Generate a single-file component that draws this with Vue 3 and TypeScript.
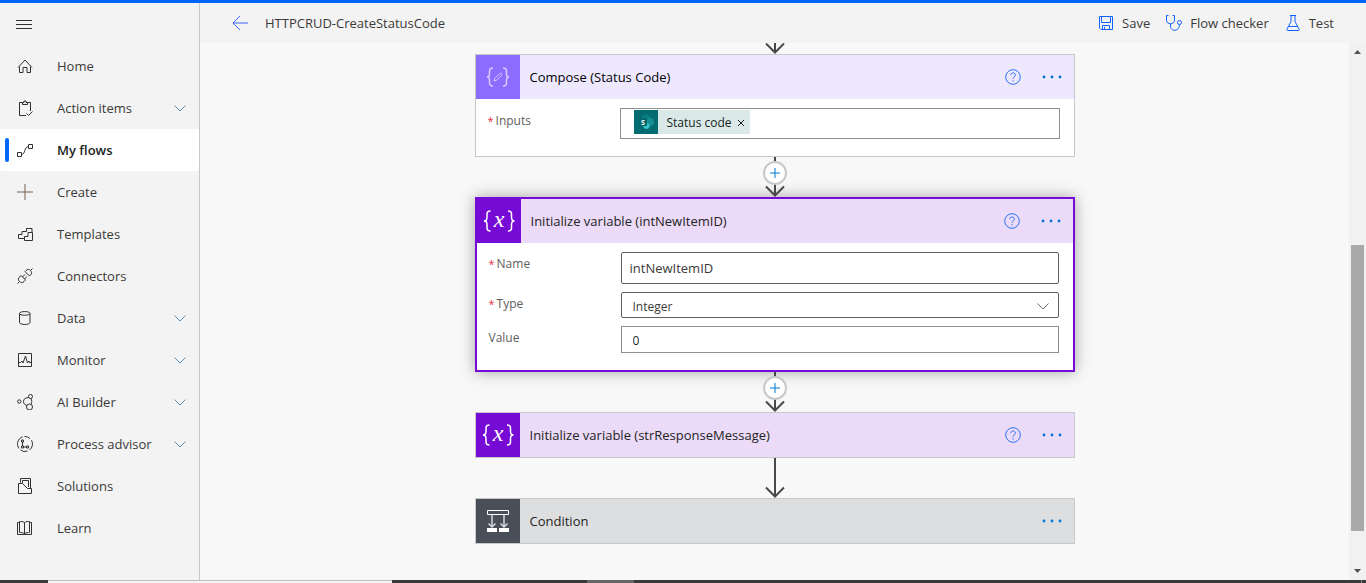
<script setup lang="ts">
import { ref } from 'vue'

interface NavItem {
  label: string
  icon: string
  expandable?: boolean
  active?: boolean
}

const navItems: NavItem[] = [
  { label: 'Home', icon: 'M1 9.5 8 2l7 7.5M2.5 8.5v6H6v-5h4v5h3.5v-6' },
  {
    label: 'Action items',
    icon: 'M9 15.5H2.5v-13h3M10.5 2.5h3V11M5.5 4.5v-2H7V1h2v1.5h1.5v2zM9.5 13.5l2 2 4-4',
    expandable: true,
  },
  {
    label: 'My flows',
    icon: 'M.5 10.5h4v4h-4zM11.5 2.5h4v4h-4zM4.5 12.5c4 0 2.5-8 7-8',
    active: true,
  },
  { label: 'Create', icon: 'M8 0v16M0 8h16' },
  {
    label: 'Templates',
    icon: 'M7 12.5H1.5v-4H5v-3h4.5v-3H15v4M7.5 14.5h8v-8H11v4H7.5z',
  },
  {
    label: 'Connectors',
    icon: 'M.5 15.5l2-2M13.5 2.5l2-2M2.5 13.5C1 12 1 10.5 2.5 9L4 7.5 8.5 12 7 13.5c-1.5 1.5-3 1.5-4.5 0zM13.5 2.5c1.5 1.5 1.5 3 0 4.5l-1 1L8 3.5l1-1c1.5-1.5 3-1.5 4.5 0zM5.5 9 8 6.5M7.5 11 10 8.5',
  },
  {
    label: 'Data',
    icon: 'M2.5 3.5c0-2.600 10.5-2.600 10.5 0v9c0 2.600-10.5 2.600-10.5 0zM2.5 3.5c0 2.300 10.5 2.300 10.5 0',
    expandable: true,
  },
  {
    label: 'Monitor',
    icon: 'M1.5 1.5h13v13h-13zM1.5 10.5h2l1.5-1.5 1 2L8.5 4l2 7 1.5-2 .5 1.5h2',
    expandable: true,
  },
  {
    label: 'AI Builder',
    icon: 'M4 7.5a1.7 1.7 0 1 1-3.4 0 1.7 1.7 0 0 1 3.4 0M15.5 2.5a2 2 0 1 1-4 0 2 2 0 0 1 4 0M15.5 13a3 3 0 1 1-6 0 3 3 0 0 1 6 0M11.5 3.5C8 3.5 6.5 5.5 6.5 7.5s1.2 3.5 3.5 4M14 4.500c1 2 1 4 0 5.500',
    expandable: true,
  },
  {
    label: 'Process advisor',
    icon: 'M5.5.9A7.5 7.5 0 0 0 2 12.500M3.500 14a7.500 7.500 0 0 0 7 1.100M12.500 14A7.500 7.500 0 0 0 14.500 4.200M13 2.500A7.500 7.500 0 0 0 7.500.5M4.500 4h2v2h-2zM5.500 6v4M4.500 10h2v2h-2zM6.500 11h3M9.500 10h2v2h-2z',
    expandable: true,
  },
  {
    label: 'Solutions',
    icon: 'M3.5 4.5v-4h10V10M5.5 5V2.5h6V9M1.5 5.5h4l5 5h4v5h-13z',
  },
  {
    label: 'Learn',
    icon: 'M2.5 2.5h-2v12h14v-12h-2M7.5 2.5C6.5 1.5 3.5 1.5 2.5 1.5v11c1 0 4 0 5 1.500 1-1.500 4-1.500 5-1.500v-11C11.5 1.500 8.500 1.500 7.500 2.500zM7.500 2.500V14',
  },
]

const variableName = ref('intNewItemID')
const variableType = ref('Integer')
const variableValue = ref('0')
const composeText = ref('')
const types = ['Boolean', 'Integer', 'Float', 'String', 'Object', 'Array']
</script>

<template>
  <div class="page">
    <div class="accent"></div>

    <div class="workspace">
      <nav class="sidebar" aria-label="Main">
        <button class="menu" type="button" aria-label="Collapse menu">
          <svg width="16" height="16" viewBox="0 0 16 16"><path d="M0 4.500h16M0 8.500h16M0 12.500h16" /></svg>
        </button>
        <a
          v-for="item in navItems"
          :key="item.label"
          href="#"
          class="nav-item"
          :class="{ active: item.active, soft: item.label === 'Create' }"
          :aria-current="item.active ? 'page' : undefined"
        >
          <svg class="nav-icon" width="16" height="16" viewBox="0 0 16 16"><path :d="item.icon" /></svg>
          <span class="nav-label">{{ item.label }}</span>
          <svg v-if="item.expandable" class="chevron" width="12" height="7" viewBox="0 0 12 7">
            <path d="M.5.5 6 6 11.5.5" />
          </svg>
        </a>
      </nav>

      <main class="main">
        <header class="topbar">
          <button class="back" type="button" aria-label="Back">
            <svg width="16" height="16" viewBox="0 0 16 16"><path d="M8 1 1 8l7 7M1 8h15" /></svg>
          </button>
          <h1 class="flow-name">HTTPCRUD-CreateStatusCode</h1>
          <div class="commands">
            <button class="command" type="button">
              <svg width="16" height="16" viewBox="0 0 16 16">
                <path d="M1.5 1.5h13v13H3l-1.5-1.5zM3.5 1.5v6h9v-6M4.5 14.5v-4h7v4M6.5 14v-2" />
              </svg>
              Save
            </button>
            <button class="command" type="button">
              <svg width="16" height="16" viewBox="0 0 16 16">
                <path d="M2.5.5h-2V5c0 5 8 5 8 0V.5h-2M4.5 8.8V11c0 6 9 6 9-1.5M15.500 7.500a2 2 0 1 1-4 0 2 2 0 0 1 4 0" />
              </svg>
              Flow checker
            </button>
            <button class="command" type="button">
              <svg width="16" height="16" viewBox="0 0 16 16">
                <path d="M5 .5h6M6 .5v6L2 14c-.4 1 0 1.500 1 1.500h10c1 0 1.400-.5 1-1.500l-4-7.500v-6M4 11.500h8.500" />
              </svg>
              Test
            </button>
          </div>
        </header>

        <div class="canvas-row">
          <div class="canvas">
            <div class="connector entry">
              <svg class="arrow" width="20" height="40" viewBox="0 0 20 40"><path d="M10 0v38M1 29.5l9 9 9-9" /></svg>
            </div>

            <section class="card compose">
              <div class="card-head">
                <span class="tile">
                  <svg width="44" height="44" viewBox="0 0 44 44">
                    <path class="curly" d="M17 13c-3 0-3.500 1-3.500 3v3c0 2-.5 3-2.500 3 2 0 2.500 1 2.500 3v3c0 2 .5 3 3.500 3M27 13c3 0 3.500 1 3.500 3v3c0 2 .5 3 2.500 3-2 0-2.500 1-2.500 3v3c0 2-.5 3-3.500 3" />
                    <path class="pencil" d="M18 26l.6-2.400 5-5c1.200-1.200 3 .6 1.800 1.800l-5 5z" />
                  </svg>
                </span>
                <h2 class="card-title">Compose (Status Code)</h2>
                <button class="help" type="button" aria-label="Help">
                  <svg width="16" height="16" viewBox="0 0 16 16">
                    <circle cx="8" cy="8" r="7.3" />
                    <path d="M5.800 6.200c0-3 4.600-3 4.600 0C10.400 7.800 8 7.800 8 9.800M8 11.200v1.300" />
                  </svg>
                </button>
                <button class="more" type="button" aria-label="More commands">
                  <svg width="22" height="16" viewBox="0 0 22 16">
                    <circle cx="3" cy="8" r="1.4" /><circle cx="11" cy="8" r="1.4" /><circle cx="19" cy="8" r="1.4" />
                  </svg>
                </button>
              </div>
              <div class="fields">
                <label for="compose-inputs"><span class="required">*</span>Inputs</label>
                <div class="token-box">
                  <span class="token">
                    <svg width="24" height="24" viewBox="0 0 24 24">
                      <rect width="24" height="24" fill="#036c70" />
                      <circle cx="12" cy="9" r="4.500" fill="#0b7e83" />
                      <circle cx="16" cy="12" r="4" fill="#168d93" />
                      <circle cx="12.500" cy="16" r="3" fill="#37c6d0" />
                      <rect x="5" y="8" width="8" height="8" rx="1" fill="#03686c" />
                      <text class="share" x="7" y="14.500">S</text>
                    </svg>
                    <span class="token-text">Status code</span>
                    <button class="token-remove" type="button" aria-label="Remove Status code">
                      <svg width="8" height="8" viewBox="0 0 8 8"><path d="M1 1l6 6M7 1 1 7" /></svg>
                    </button>
                  </span>
                  <input id="compose-inputs" v-model="composeText" class="token-input" type="text" />
                </div>
              </div>
            </section>

            <div class="connector">
              <svg class="arrow" width="20" height="40" viewBox="0 0 20 40"><path d="M10 0v38M1 29.5l9 9 9-9" /></svg>
              <button class="insert" type="button" aria-label="Insert a new step">
                <svg width="12" height="12" viewBox="0 0 12 12"><path d="M6 1v10M1 6h10" /></svg>
              </button>
            </div>

            <section class="card variable selected">
              <div class="card-head">
                <span class="tile">
                  <svg width="44" height="44" viewBox="0 0 44 44">
                    <path class="curly" d="M13.500 12c-3 0-3.500 1-3.500 3v3.500c0 2-.5 3.500-3 3.500 2.500 0 3 1.500 3 3.500V29c0 2 .5 3 3.500 3M31 12c3 0 3.500 1 3.500 3v3.500c0 2 .5 3.500 3 3.500-2.500 0-3 1.500-3 3.500V29c0 2-.5 3-3.500 3" />
                    <text class="letter" x="22" y="28">x</text>
                  </svg>
                </span>
                <h2 class="card-title">Initialize variable (intNewItemID)</h2>
                <button class="help" type="button" aria-label="Help">
                  <svg width="16" height="16" viewBox="0 0 16 16">
                    <circle cx="8" cy="8" r="7.3" />
                    <path d="M5.800 6.200c0-3 4.600-3 4.600 0C10.400 7.800 8 7.800 8 9.800M8 11.200v1.300" />
                  </svg>
                </button>
                <button class="more" type="button" aria-label="More commands">
                  <svg width="22" height="16" viewBox="0 0 22 16">
                    <circle cx="3" cy="8" r="1.4" /><circle cx="11" cy="8" r="1.4" /><circle cx="19" cy="8" r="1.4" />
                  </svg>
                </button>
              </div>
              <div class="fields">
                <label for="var-name"><span class="required">*</span>Name</label>
                <input id="var-name" v-model="variableName" class="box name-box" type="text" />
                <label for="var-type"><span class="required">*</span>Type</label>
                <div class="select-wrap">
                  <select id="var-type" v-model="variableType" class="box type-box">
                    <option v-for="t in types" :key="t">{{ t }}</option>
                  </select>
                  <svg class="select-arrow" width="12" height="7" viewBox="0 0 12 7"><path d="M.5.5 6 6 11.5.5" /></svg>
                </div>
                <label for="var-value">Value</label>
                <input id="var-value" v-model="variableValue" class="box value-box" type="text" />
              </div>
            </section>

            <div class="connector">
              <svg class="arrow" width="20" height="40" viewBox="0 0 20 40"><path d="M10 0v38M1 29.5l9 9 9-9" /></svg>
              <button class="insert" type="button" aria-label="Insert a new step">
                <svg width="12" height="12" viewBox="0 0 12 12"><path d="M6 1v10M1 6h10" /></svg>
              </button>
            </div>

            <section class="card variable">
              <div class="card-head">
                <span class="tile">
                  <svg width="44" height="44" viewBox="0 0 44 44">
                    <path class="curly" d="M13.500 12c-3 0-3.500 1-3.500 3v3.500c0 2-.5 3.500-3 3.500 2.500 0 3 1.500 3 3.500V29c0 2 .5 3 3.500 3M31 12c3 0 3.500 1 3.500 3v3.500c0 2 .5 3.500 3 3.500-2.500 0-3 1.500-3 3.500V29c0 2-.5 3-3.500 3" />
                    <text class="letter" x="22" y="28">x</text>
                  </svg>
                </span>
                <h2 class="card-title">Initialize variable (strResponseMessage)</h2>
                <button class="help" type="button" aria-label="Help">
                  <svg width="16" height="16" viewBox="0 0 16 16">
                    <circle cx="8" cy="8" r="7.3" />
                    <path d="M5.800 6.200c0-3 4.600-3 4.600 0C10.400 7.800 8 7.800 8 9.800M8 11.200v1.300" />
                  </svg>
                </button>
                <button class="more" type="button" aria-label="More commands">
                  <svg width="22" height="16" viewBox="0 0 22 16">
                    <circle cx="3" cy="8" r="1.4" /><circle cx="11" cy="8" r="1.4" /><circle cx="19" cy="8" r="1.4" />
                  </svg>
                </button>
              </div>
            </section>

            <div class="connector">
              <svg class="arrow" width="20" height="40" viewBox="0 0 20 40"><path d="M10 0v38M1 29.5l9 9 9-9" /></svg>
            </div>

            <section class="card condition">
              <div class="card-head">
                <span class="tile">
                  <svg width="44" height="44" viewBox="0 0 44 44">
                    <path class="frame" d="M11.5 11.5h21v4h-21z" />
                    <path class="branch" d="M16 16v12M12.5 24.5l3.5 3.5 3.5-3.5M28 16v12M24.5 24.5l3.500 3.500 3.500-3.500" />
                    <path class="leaf" d="M11 29h10v4H11zM23 29h10v4H23z" />
                  </svg>
                </span>
                <h2 class="card-title">Condition</h2>
                <button class="more" type="button" aria-label="More commands">
                  <svg width="22" height="16" viewBox="0 0 22 16">
                    <circle cx="3" cy="8" r="1.4" /><circle cx="11" cy="8" r="1.4" /><circle cx="19" cy="8" r="1.4" />
                  </svg>
                </button>
              </div>
            </section>
          </div>

          <div class="scrollbar" aria-hidden="true">
            <svg width="17" height="17" viewBox="0 0 17 17"><path d="M5 11h7L8.5 7z" /></svg>
            <div class="track">
              <div class="before"></div>
              <div class="thumb"></div>
              <div class="after"></div>
            </div>
            <svg width="17" height="17" viewBox="0 0 17 17"><path d="M5 6h7l-3.5 4z" /></svg>
          </div>
        </div>
      </main>
    </div>

    <div class="taskbar" aria-hidden="true">
      <span class="start"></span>
      <span class="search"></span>
      <span class="apps"><span class="app"></span><span class="desktop"></span></span>
    </div>
  </div>
</template>

<style>
body {
  margin: 0;
  overflow: hidden;
}
</style>

<style scoped>
.page {
  display: flex;
  flex-direction: column;
  height: 100vh;
  font-family: 'Open Sans', 'Noto Sans', sans-serif;
  font-size: 13px;
  line-height: 20px;
  color: #3b3a39;
  background: #f8f8f8;
}

.page *,
.page *::before {
  box-sizing: border-box;
}

button {
  display: flex;
  align-items: center;
  padding: 0;
  border: 0;
  background: none;
  color: inherit;
  font: inherit;
  cursor: pointer;
}

input,
select {
  min-width: 0;
  margin: 0;
  font: inherit;
  color: inherit;
}

svg {
  display: block;
  flex: none;
  fill: none;
}

h1,
h2 {
  margin: 0;
  font-size: 13px;
  font-weight: 400;
}

.accent {
  flex: none;
  height: 3px;
  background: #0066ff;
}

.workspace {
  display: flex;
  flex: 1;
  min-height: 0;
}

/* Sidebar */
.sidebar {
  flex: none;
  width: 200px;
  overflow: hidden;
  border-right: 1px solid #c8c8c8;
  background: #f3f3f3;
}

.menu {
  height: 42px;
  padding-left: 16px;
}

.menu svg,
.nav-icon {
  stroke: #323130;
}

.nav-item {
  position: relative;
  display: flex;
  align-items: center;
  height: 42px;
  padding: 0 13px 0 17px;
  border-radius: 2px;
  color: inherit;
  text-decoration: none;
}

.nav-item.active {
  background: #fff;
  color: #201f1e;
  font-weight: 600;
}

.nav-item.active::before {
  content: '';
  position: absolute;
  left: 5px;
  top: 9px;
  width: 4px;
  height: 24px;
  border-radius: 2px;
  background: #0066ff;
}

.nav-item.soft .nav-icon {
  stroke: #76604f;
}

.nav-label {
  flex: 1;
  padding-left: 24px;
}

.chevron {
  stroke: #5b8fb5;
}

/* Top bar */
.main {
  display: flex;
  flex: 1;
  flex-direction: column;
  min-width: 0;
}

.topbar {
  display: flex;
  flex: none;
  align-items: center;
  gap: 17px;
  height: 40px;
  padding: 0 32px;
  background: #f3f3f3;
}

.back svg {
  stroke: #3a62f5;
}

.flow-name {
  flex: 1;
}

.commands {
  display: flex;
  gap: 16px;
}

.command {
  gap: 8px;
}

.command svg {
  stroke: #0f62fe;
}

/* Designer canvas */
.canvas-row {
  display: flex;
  flex: 1;
  min-height: 0;
}

.canvas {
  display: flex;
  flex: 1;
  flex-direction: column;
  align-items: center;
  min-width: 0;
  overflow: hidden;
}

.connector {
  position: relative;
  display: flex;
  flex: none;
  justify-content: center;
  height: 40px;
}

.connector.entry {
  align-items: flex-end;
  height: 11px;
  overflow: hidden;
}

.arrow {
  stroke: #484848;
  stroke-width: 2px;
}

.insert {
  position: absolute;
  top: 4px;
  justify-content: center;
  width: 24px;
  height: 24px;
  border: 2px solid #c8c8c8;
  border-radius: 50%;
  background: #fff;
}

.insert svg {
  stroke: #0078d4;
}

.card {
  flex: none;
  width: 600px;
  max-width: 100%;
  border: 1px solid #c8c8c8;
  background: #fff;
}

.card.selected {
  border: 2px solid #770bd6;
  box-shadow: 0 0 14px rgba(0, 0, 0, 0.35);
}

.card-head {
  display: flex;
  align-items: center;
  height: 44px;
  padding-right: 11px;
  color: #000;
}

.tile {
  flex: none;
  width: 44px;
  height: 44px;
}

.card-title {
  flex: 1;
  padding-left: 10px;
}

.compose .card-head {
  background: #eee8ff;
}

.compose .tile {
  background: #8c6cff;
}

.variable .card-head {
  background: #ebdaf8;
  color: #252423;
}

.variable .tile {
  background: #770bd6;
}

.condition .card-head {
  background: #dddee0;
  color: #252423;
}

.condition .tile {
  background: #484f58;
}

.curly {
  stroke: #fff;
  stroke-width: 1.5px;
}

.letter {
  fill: #fff;
  font-family: 'Liberation Serif', serif;
  font-size: 24px;
  font-style: italic;
  text-anchor: middle;
}

.compose .curly {
  stroke: #d6caff;
}

.pencil {
  stroke: #d6caff;
}

.frame {
  stroke: #fff;
}

.branch {
  stroke: #d5d7da;
  stroke-width: 1.5px;
}

.leaf {
  fill: #fff;
}

.help {
  margin-right: 20px;
}

.help svg {
  stroke: #2b74f5;
}

.more svg {
  fill: #0078d4;
}

/* Parameter fields */
.fields {
  display: grid;
  grid-template-columns: 132px 1fr;
  row-gap: 8px;
  align-items: start;
  padding: 9px 14px 17px 12px;
}

.fields label {
  color: #605e5c;
  font-size: 12px;
  line-height: 24px;
}

.compose .fields label {
  line-height: 26px;
}

.required {
  padding-right: 2px;
  color: #e8303f;
  font-size: 11px;
}

.box {
  display: block;
  width: 100%;
  border: 1px solid #605e5c;
  border-radius: 2px;
  background: #fff;
}

.name-box {
  height: 32px;
  padding: 0 8px;
}

.select-wrap {
  position: relative;
}

.type-box {
  height: 26px;
  padding: 3px 32px 0 11px;
  appearance: none;
  font-size: 12px;
}

.select-arrow {
  position: absolute;
  right: 10px;
  top: 11px;
  pointer-events: none;
  stroke: #76706c;
}

.value-box {
  height: 27px;
  padding: 2px 11px 0;
  border-color: #8f8f8f;
  border-radius: 0;
  color: #201f1e;
  font-size: 12px;
}

.token-box {
  display: flex;
  align-items: flex-start;
  height: 31px;
  padding: 1px 13px;
  border: 1px solid #8f8f8f;
}

.token {
  display: flex;
  flex: none;
  align-items: center;
  height: 24px;
  padding-right: 5px;
  background: #dae9e8;
  color: #201f1e;
  font-size: 12px;
}

.token-text {
  padding: 2px 5px 0 9px;
}

.token-remove {
  padding-top: 2px;
}

.token-remove svg {
  stroke: #201f1e;
}

.token-input {
  flex: 1;
  height: 24px;
  padding: 0 4px;
  border: 0;
  outline: 0;
  background: none;
  font-size: 12px;
}

.share {
  fill: #fff;
  font-size: 7px;
  font-weight: 700;
}

/* Scroll bar */
.scrollbar {
  display: flex;
  flex: none;
  flex-direction: column;
  width: 17px;
  background: #f1f1f1;
}

.scrollbar svg {
  fill: #505050;
}

.track {
  display: flex;
  flex: 1;
  flex-direction: column;
  padding: 0 2px;
}

.before {
  flex: 185;
}

.thumb {
  flex: 286;
  background: #a8a8a8;
}

.after {
  flex: 32;
}

/* Taskbar edge */
.taskbar {
  display: flex;
  flex: none;
  height: 3px;
}

.start {
  width: 48px;
  background: #3a3a3a;
}

.search {
  width: 344px;
  border-top: 1px solid #bdbdbd;
  background: #f3f3f3;
}

.apps {
  display: flex;
  flex: 1;
  justify-content: space-between;
  padding: 0 4px 0 195px;
  background: #3a3a3a;
}

.app {
  width: 47px;
  background: #666;
}

.desktop {
  width: 1px;
  background: #8a8a8a;
}
</style>
